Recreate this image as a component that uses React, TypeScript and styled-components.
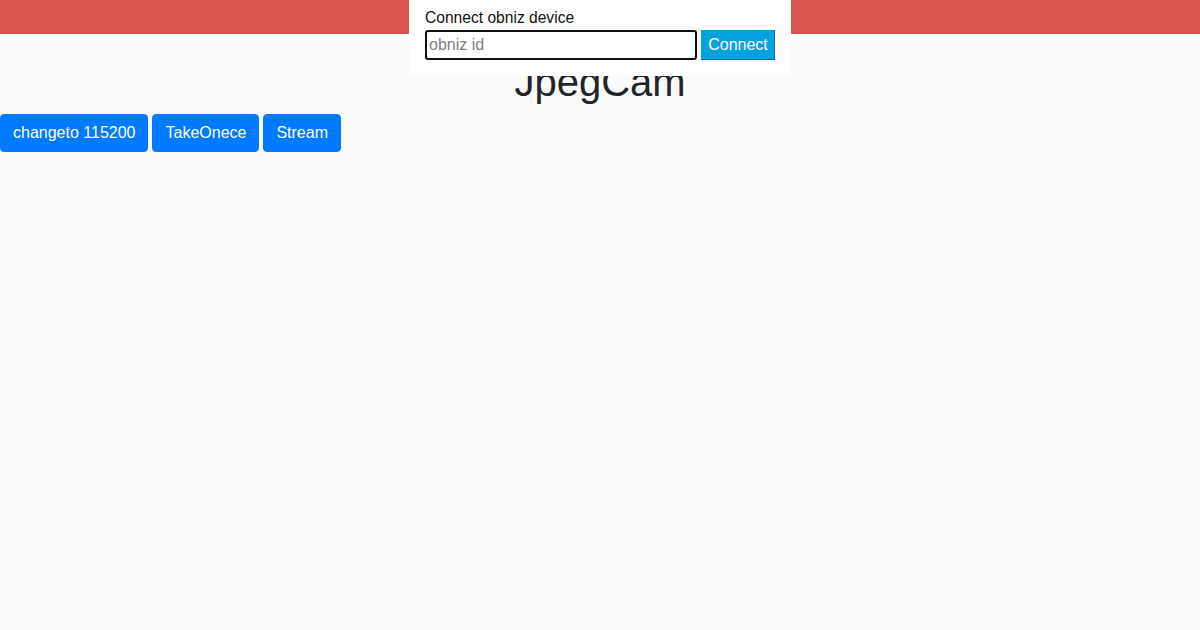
import React from 'react'
import styled, { createGlobalStyle } from 'styled-components'

const GlobalStyle = createGlobalStyle`
html, body {
  margin: 0;
  padding: 0;
  background: #fafafa;
  font-family: "Liberation Sans", Arial, sans-serif;
  color: #212529;
}
`

const App = () => {
  return (
    <Page>
      <GlobalStyle />
      <TopBar />
      <Title>JpegCam</Title>
      <Buttons>
        <Btn>changeto 115200</Btn>
        <Btn>TakeOnece</Btn>
        <Btn>Stream</Btn>
      </Buttons>
      <Dialog>
        <Label>Connect obniz device</Label>
        <Row>
          <IdInput placeholder="obniz id" autoFocus />
          <ConnectBtn>Connect</ConnectBtn>
        </Row>
      </Dialog>
    </Page>
  )
}

export default App

const Page = styled.div`
position: relative;
width: 100%;
min-height: 630px;
background: #fafafa;
`

const TopBar = styled.div`
height: 34px;
background-color: #d9534f;
`

const Title = styled.h1`
margin: 24px 0 8px;
font-size: 40px;
font-weight: 400;
line-height: 1.2;
text-align: center;
color: #212529;
`

const Buttons = styled.div`
display: flex;
gap: 4px;
`

const Btn = styled.button`
height: 38px;
padding: 0 12px;
border: 1px solid #007bff;
border-radius: 4px;
background-color: #007bff;
color: #fff;
font-family: "Liberation Sans", Arial, sans-serif;
font-size: 16px;
line-height: 1.5;
cursor: pointer;
`

const Dialog = styled.div`
position: absolute;
top: 0;
left: 409px;
width: 382px;
box-sizing: border-box;
padding: 8px 16px 16px;
background: #fff;
`

const Label = styled.div`
font-size: 15.6px;
line-height: 20px;
color: #111;
margin-bottom: 2px;
`

const Row = styled.div`
display: flex;
gap: 4px;
`

const IdInput = styled.input`
width: 272px;
height: 30px;
box-sizing: border-box;
padding: 0 2px;
border: 2px solid #111;
border-radius: 3px;
outline: none;
font-family: "Liberation Sans", Arial, sans-serif;
font-size: 16px;
color: #111;
background: #fff;
&::placeholder {
  color: #808080;
}
`

const ConnectBtn = styled.button`
width: 74px;
height: 30px;
box-sizing: border-box;
padding: 0;
border: 1px solid #05a2e0;
border-right-color: #0a6f9c;
border-bottom-color: #0a6f9c;
background-color: #05a2e0;
color: #fff;
font-family: "Liberation Sans", Arial, sans-serif;
font-size: 16px;
cursor: pointer;
`
